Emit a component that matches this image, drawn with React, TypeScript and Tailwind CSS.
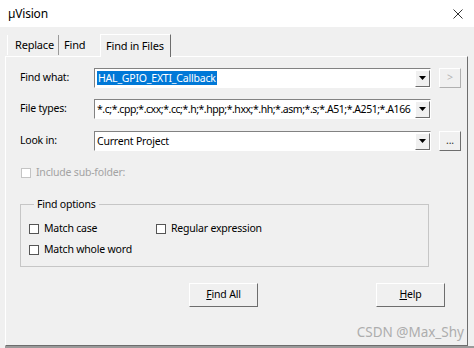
import React from "react";

const sunken = "border-t border-l border-t-[#828282] border-l-[#828282] border-b border-r border-b-white border-r-white bg-white";
const raised = "border-t border-l border-t-white border-l-white border-b border-r border-b-[#6d6d6d] border-r-[#6d6d6d] bg-[#f0f0f0]";

function Arrow() {
    return <div className={`w-[15px] h-[17px] flex items-center justify-center shrink-0 ${raised}`}>
        <svg width="7" height="4" viewBox="0 0 7 4"><path d="M0 0h7L3.5 4z" fill="#000" /></svg>
    </div>
}

function Combo({ children }: { children: React.ReactNode }) {
    return <div className={`w-[337px] h-[20px] flex items-center ${sunken}`}>
        <div className="flex-1 overflow-hidden whitespace-nowrap pl-[2px] leading-[15px]">{children}</div>
        <Arrow />
    </div>
}

function Check({ label, disabled }: { label: string, disabled?: boolean }) {
    return <div className="flex items-center gap-[5px]">
        <div className={`w-[10px] h-[10px] border ${disabled ? "border-[#c4c4c4]" : "border-[#555]"} bg-white`}></div>
        <span className={disabled ? "text-[#a3a3a3]" : ""}>{label}</span>
    </div>
}

export default function App() {
    return <div className="w-[474px] h-[348px] bg-[#f0f0f0] overflow-hidden text-[10.5px] tracking-[-0.2px] text-black flex flex-col" style={{ fontFamily: '"Noto Sans", sans-serif' }}>
        <div className="h-[27px] bg-white flex items-center justify-between pl-[8px] pr-[11px] shrink-0">
            <span className="text-[12px]">µVision</span>
            <svg width="10" height="10" viewBox="0 0 10 10"><path d="M0.5 0.5l9 9M9.5 0.5l-9 9" stroke="#333" strokeWidth="1" /></svg>
        </div>
        <div className="pl-[5px] pr-[6px] flex flex-col flex-1">
            <div className="flex items-end h-[29px] pl-[2px]">
                <div className="w-[52px] h-[20px] pl-[7px] flex items-center border-l border-white border-r border-r-[#9a9a9a] mb-[1px] text-[11px]">Replace</div>
                <div className="w-[38px] h-[20px] pl-[5px] flex items-center mb-[1px] text-[11px]">Find</div>
                <div className="w-[71px] h-[23px] ml-[3px] pl-[5px] flex items-center border-t border-l border-white border-r border-r-[#6d6d6d] bg-[#f0f0f0] -mb-[1px] relative text-[11px]">Find in Files</div>
            </div>
            <div className="flex-1 border-t border-l border-white border-r border-b border-r-[#6d6d6d] border-b-[#6d6d6d] flex flex-col pl-[14px] pt-[11px]">
                <div className="flex items-center h-[20px]">
                    <div className="w-[74px]">Find what:</div>
                    <Combo><span className="bg-[#0078d7] text-white px-[1px]">HAL_GPIO_EXTI_Callback</span></Combo>
                    <div className={`ml-[8px] w-[22px] h-[20px] flex items-center justify-center text-[#b5b5b5] ${raised} border-b-[#b0b0b0] border-r-[#b0b0b0]`}>&gt;</div>
                </div>
                <div className="flex items-center h-[20px] mt-[11px]">
                    <div className="w-[74px]">File types:</div>
                    <Combo><span className="tracking-[-0.45px]">*.c;*.cpp;*.cxx;*.cc;*.h;*.hpp;*.hxx;*.hh;*.asm;*.s;*.A51;*.A251;*.A166</span></Combo>
                </div>
                <div className="flex items-center h-[20px] mt-[12px]">
                    <div className="w-[74px]">Look in:</div>
                    <Combo>Current Project</Combo>
                    <div className={`ml-[8px] w-[22px] h-[20px] flex items-center justify-center text-[#333] ${raised}`}>...</div>
                </div>
                <div className="mt-[16px] pl-[1px] h-[12px] flex items-center">
                    <Check label="Include sub-folder:" disabled />
                </div>
                <fieldset className="mt-[18px] w-[409px] border border-[#c6c6c6] pl-[8px] pb-[9px] pt-[10px]">
                    <legend className="ml-[5px] px-[3px] leading-[14px]">Find options</legend>
                    <div className="grid grid-cols-[127px_1fr] gap-y-[6px] leading-[15px]">
                        <Check label="Match case" />
                        <Check label="Regular expression" />
                        <Check label="Match whole word" />
                    </div>
                </fieldset>
                <div className="flex mt-[16px]">
                    <div className={`ml-[169px] w-[69px] h-[24px] flex items-center justify-center ${raised}`}><span><u>F</u>ind All</span></div>
                    <div className={`ml-[118px] w-[69px] h-[24px] flex items-center justify-center ${raised}`}><span><u>H</u>elp</span></div>
                </div>
                <div className="mt-auto pb-[5px] pr-[3px] text-right text-[13.5px] tracking-normal text-[#adadad] leading-[16px]">CSDN @Max_Shy</div>
            </div>
        </div>
        <div className="h-[2px] bg-[#9a9a9a] ml-[5px] shrink-0"></div>
    </div>
}
